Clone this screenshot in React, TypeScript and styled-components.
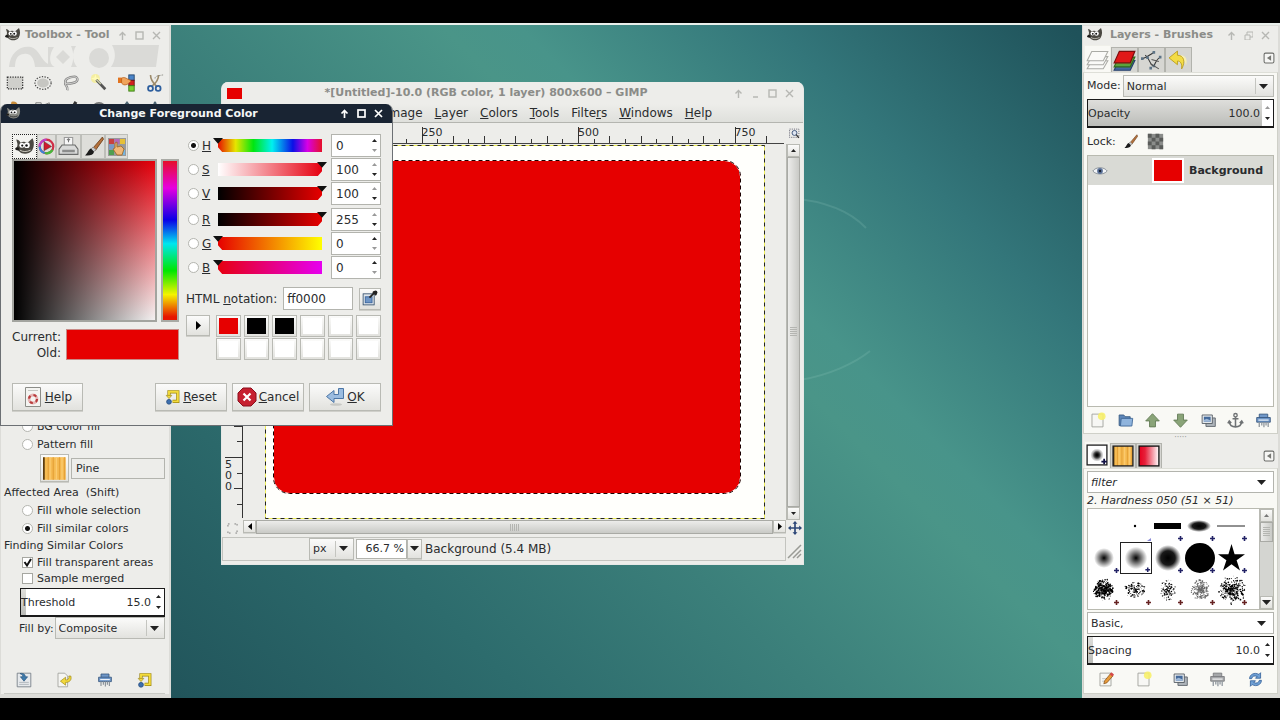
import React, { ReactNode } from 'react';
import styled, { createGlobalStyle, css } from 'styled-components';

const Global = createGlobalStyle`
  * { box-sizing: border-box; }
  body { margin: 0; background: #000; }
  body, button, input, select {
    font-family: 'DejaVu Sans', sans-serif;
    font-size: 11px;
    color: #2a2c2e;
  }
  button { padding: 0; }
  svg { display: block; flex: none; }
`;

/* ---------- desktop ---------- */

const Screen = styled.div`
  min-height: 100vh;
  padding: 23px 0 22px;
  background: #000;
  display: flex;
  flex-direction: column;
`;

const Desktop = styled.main`
  position: relative;
  flex: 1;
  display: flex;
  justify-content: space-between;
  border-top: 2px solid #e9efeb;
  overflow: hidden;
  background: linear-gradient(45deg, #1b464e 0%, #22565c 10%, #2d6c6d 27%, #3b7f7a 42%, #4a9588 57%, #48948a 61%, #33767a 74%, #1f525a 89%, #1b4b54 100%);
`;

const Wallpaper = styled.svg`
  position: absolute;
  left: 690px;
  top: 160px;
`;

/* ---------- window parts ---------- */

const Dock = styled.section<{ $width: number }>`
  position: relative;
  width: ${p => p.$width}px;
  display: flex;
  flex-direction: column;
  background: #ededea;
  border: 1px solid #dcdcd8;
  border-bottom-width: 4px;
  border-right-width: 2px;
`;

const FloatingWindow = styled.section<{ $left: number; $top: number; $width: number; $front?: boolean }>`
  position: absolute;
  left: ${p => p.$left}px;
  top: ${p => p.$top}px;
  width: ${p => p.$width}px;
  display: flex;
  flex-direction: column;
  background: #ededea;
  border: 1px solid ${p => (p.$front ? '#6c7074' : '#e6e8e6')};
  border-top: 0;
  border-radius: 7px 7px 0 0;
  overflow: hidden;
`;

const TitleBar = styled.header<{ $tone?: 'dark' | 'dock' }>`
  height: ${p => (p.$tone === 'dark' ? 19 : p.$tone === 'dock' ? 18 : 22)}px;
  flex: none;
  display: flex;
  align-items: center;
  gap: 4px;
  padding: 0 ${p => (p.$tone === 'dock' ? 4 : 5)}px;
  background: ${p => (p.$tone === 'dark' ? '#192433' : '#ededea')};
  color: ${p => (p.$tone === 'dark' ? '#f4f6f6' : '#8b8c88')};
`;

const Title = styled.h1<{ $center?: boolean }>`
  flex: 1;
  margin: 0;
  font-size: 11px;
  line-height: 16px;
  font-weight: bold;
  white-space: nowrap;
  text-align: ${p => (p.$center ? 'center' : 'left')};
`;

const DockTitle = styled(Title)`
  padding-left: 3px;
`;

const WindowButtons = styled.div<{ $light?: boolean }>`
  display: flex;
  color: ${p => (p.$light ? '#fff' : '#b6b7b3')};
`;

const BareButton = styled.button<{ $w?: number; $h?: number }>`
  width: ${p => p.$w ?? 17}px;
  height: ${p => p.$h ?? 16}px;
  border: 0;
  background: none;
  color: inherit;
  display: flex;
  align-items: center;
  justify-content: center;
`;

/* ---------- controls ---------- */

const raised = css`
  border: 1px solid #b9bab4;
  background: linear-gradient(#fbfbfa, #e2e2de);
`;

const field = css`
  border: 1px solid #b3b4ae;
  background: #fff;
`;

const RaisedButton = styled.button<{ $w: number; $h: number }>`
  ${raised}
  width: ${p => p.$w}px;
  height: ${p => p.$h}px;
  display: flex;
  align-items: center;
  justify-content: center;
  gap: 2px;
  font-size: 12px;
  box-shadow: 0 1px 0 #cfcfca;
`;

const Radio = styled.input.attrs({ type: 'radio' })`
  appearance: none;
  flex: none;
  width: 11px;
  height: 11px;
  margin: 0;
  border: 1px solid #b4b5af;
  border-radius: 50%;
  background: #fff;
  &:checked { background: radial-gradient(circle, #111 0 2px, #fff 3px); }
`;

const CheckWrap = styled.span`
  display: grid;
  flex: none;
  > * { grid-area: 1 / 1; }
  > svg { pointer-events: none; z-index: 1; }
`;

const Check = styled.input.attrs({ type: 'checkbox' })`
  appearance: none;
  width: 11px;
  height: 11px;
  margin: 0;
  border: 1px solid #a6a7a1;
  background: #fff;
`;

const ComboBox = styled.div<{ $flat?: boolean; $width?: number }>`
  ${p => (p.$flat ? field : raised)}
  position: relative;
  height: 22px;
  ${p => (p.$width ? `width: ${p.$width}px;` : 'flex: 1;')}
  min-width: 0;
  display: flex;
  align-items: center;
  > svg { position: absolute; right: ${p => (p.$flat ? 7 : 5)}px; pointer-events: none; }
  &::after {
    content: '';
    position: absolute;
    right: 17px;
    top: 2px;
    bottom: 2px;
    border-left: ${p => (p.$flat ? 0 : 1)}px solid #c4c5c0;
  }
`;

const Select = styled.select<{ $size?: number; $italic?: boolean }>`
  appearance: none;
  width: 100%;
  height: 20px;
  padding: 0 18px 0 3px;
  border: 0;
  background: none;
  font-size: ${p => p.$size ?? 11}px;
  font-style: ${p => (p.$italic ? 'italic' : 'normal')};
`;

const ScaleBox = styled.div`
  display: flex;
  height: 29px;
  border: 1px solid #1a1a1a;
  border-bottom-width: 2px;
  background: #fff;
`;

const ScaleFill = styled.div<{ $fill: string }>`
  flex: 1;
  min-width: 0;
  display: flex;
  align-items: center;
  background: linear-gradient(to right, transparent ${p => p.$fill}, #fff ${p => p.$fill}), linear-gradient(#dededb, #bcbdb9);
`;

const ScaleInput = styled.input`
  flex: 1;
  width: 20px;
  min-width: 0;
  padding: 0 2px 0 0;
  border: 0;
  background: none;
  text-align: right;
`;

const Steppers = styled.div<{ $w?: number }>`
  width: ${p => p.$w ?? 11}px;
  flex: none;
  display: flex;
  flex-direction: column;
  justify-content: space-evenly;
  align-items: center;
`;

const SpinField = styled.div`
  ${field}
  width: 50px;
  height: 23px;
  display: flex;
  input {
    flex: 1;
    min-width: 0;
    width: 20px;
    padding: 0 0 0 4px;
    border: 0;
    background: none;
    font-size: 12px;
  }
`;

/* ---------- small pieces ---------- */

const Up = ({ c = '#222' }: { c?: string }) => (
  <svg width="5" height="3" viewBox="0 0 5 3"><path d="M0 3L2.5 0L5 3z" fill={c} /></svg>
);
const Down = ({ c = '#222', big }: { c?: string; big?: boolean }) => (
  <svg width={big ? 9 : 5} height={big ? 5 : 3} viewBox="0 0 6 3" preserveAspectRatio="none"><path d="M0 0H6L3 3z" fill={c} /></svg>
);

const StepperPair = ({ name, w, offUp, offDown }: { name: string; w?: number; offUp?: boolean; offDown?: boolean }) => (
  <Steppers $w={w}>
    <BareButton $w={9} $h={9} aria-label={`Increase ${name}`}><Up c={offUp ? '#999' : '#222'} /></BareButton>
    <BareButton $w={9} $h={9} aria-label={`Decrease ${name}`}><Down c={offDown ? '#999' : '#222'} /></BareButton>
  </Steppers>
);

const Scale = ({ label, value, fill, offUp }: { label: string; value: string; fill: string; offUp?: boolean }) => (
  <ScaleBox>
    <ScaleFill $fill={fill}>
      <label htmlFor={label}>{label}</label>
      <ScaleInput id={label} defaultValue={value} />
    </ScaleFill>
    <StepperPair name={label} offUp={offUp} />
  </ScaleBox>
);

const Combo = ({ label, value, flat, italic, size, width, id }: { label: string; value: string; flat?: boolean; italic?: boolean; size?: number; width?: number; id?: string }) => (
  <ComboBox $flat={flat} $width={width}>
    <Select id={id} aria-label={label} $italic={italic} $size={size}><option>{value}</option></Select>
    <Down big />
  </ComboBox>
);

const winGlyphs: Record<string, ReactNode> = {
  up: <path d="M4.500 9V1.500M1.500 4.500L4.500 1.500L7.500 4.500" />,
  min: <path d="M2 8H7" />,
  max: <rect x="1" y="1" width="7" height="7" />,
  restore: <path d="M1 4H6V9H1zM3 4V1H9V6H6" strokeWidth="1" />,
  close: <path d="M1 1L8 8M8 1L1 8" />,
};

const WinControls = ({ kinds, light }: { kinds: string[]; light?: boolean }) => (
  <WindowButtons $light={light}>
    {kinds.map(k => (
      <BareButton key={k} aria-label={k}>
        <svg width="9" height="9" viewBox="0 0 9 9" fill="none" stroke="currentColor" strokeWidth={light ? 1.7 : 1.4}>{winGlyphs[k]}</svg>
      </BareButton>
    ))}
  </WindowButtons>
);

const Wilber = ({ size = 16, light }: { size?: number; light?: boolean }) => (
  <svg width={size} height={size} viewBox="0 0 16 16">
    <path d="M1 2C2.500 2 3.500 3 4.500 4.500C6 3.500 8 3.600 10 4.500L14 1C15.500 4 15.500 8 13.500 11C11 14 5.500 14 3.500 11.500L.5 9.500C1.500 8.500 2 7 2 5.500z" fill={light ? '#8a8b84' : '#4a4842'} />
    <circle cx="5.500" cy="6.500" r="2" fill="#fff" /><circle cx="9.500" cy="6.500" r="2.300" fill="#fff" />
    <circle cx="5.800" cy="6.800" r=".9" fill="#111" /><circle cx="9.200" cy="6.800" r="1" fill="#111" />
    <path d="M4 10.500C6 12 9.500 12 12.500 10.500" stroke={light ? '#222' : '#c9c7bd'} strokeWidth=".8" fill="none" />
    <ellipse cx="1.800" cy="9.300" rx="1.600" ry="1.200" fill="#1d1c1a" />
  </svg>
);

/* ---------- icons, all on a 20 x 20 grid ---------- */

const sheet = <path d="M3.500 2.500H16.500V17.500H3.500z" fill="#f7f7f4" stroke="#9c9d98" />;
const shred = (body: string, edge: string) => (
  <>
    <path d="M5 2.500H15V8H5z" fill={body} stroke={edge} />
    <path d="M2 6.500H18V12H2z" fill={body} stroke={edge} />
    <path d="M4 9.500H16" stroke="#fff" strokeWidth="1.200" />
    <path d="M5 12V17.500M8 12V16M10.500 12V18M13 12V16M15.500 12V17.500" stroke="#8d959c" strokeWidth="1.500" />
  </>
);
const resetShape = (
  <>
    <path d="M5 8V3.500H16V15.500H9.500" fill="none" stroke="#9a8412" strokeWidth="4" />
    <path d="M5 8V3.500H16V15.500H9.500" fill="none" stroke="#f4dc3c" strokeWidth="2.400" />
    <path d="M1.500 8H8.500L5 12z" fill="#f4dc3c" stroke="#9a8412" strokeWidth=".8" />
    <circle cx="5" cy="16" r="3" fill="#3d6fae" stroke="#254b7e" />
  </>
);
const brushShape = (
  <>
    <path d="M18.500 1L9.500 11.500L12 13.500L19.500 3z" fill="#b4713c" stroke="#6c401d" strokeWidth=".8" />
    <path d="M9.500 10.500L7.500 12.500L10 15L12.500 13z" fill="#c9cbcc" stroke="#777" strokeWidth=".6" />
    <path d="M7.500 12C5 13 5 16 2 18.500C6.500 19 10 18 10.500 15z" fill="#1c1c1c" />
  </>
);
const copies = (
  <>
    <path d="M7 7H18V17H7z" fill="#aeb4ba" stroke="#5a6068" />
    <path d="M2.500 3.500H14.500V13.500H2.500z" fill="#e8ecef" stroke="#4c545c" />
    <path d="M4.500 5.500H12.500V11.500H4.500z" fill="#44699a" />
    <path d="M4.500 9.500L8 8L12.500 10V11.500H4.500z" fill="#9fb9d8" />
  </>
);
const pine = (
  <>
    <rect x="1" y="1" width="18" height="18" fill="#f5bb52" />
    <path d="M1.500 1V19" stroke="#5b3c10" strokeWidth="1.400" />
    <path d="M5 1V19M9 1V19M14 1V19M18 1V19" stroke="#e6a238" strokeWidth="1" />
    <path d="M6.500 1V19M11.500 1V19M16 1V19" stroke="#fcca70" strokeWidth="1" />
  </>
);

const icons: Record<string, ReactNode> = {
  rect: <><rect x="2" y="4" width="16" height="12" fill="#cfcfcb" /><rect x="1.500" y="3.500" width="17" height="13" fill="none" stroke="#333" strokeWidth="1.400" strokeDasharray="1.500 1.300" /></>,
  ellipse: <><ellipse cx="10" cy="10" rx="6.500" ry="5" fill="#c6c6c2" /><ellipse cx="10" cy="10" rx="9" ry="7" fill="none" stroke="#444" strokeWidth="1.300" strokeDasharray="1.500 1.500" /></>,
  lasso: <><path d="M4 10C2 6 8 3 14 3C19 4 18 9 12 10C8 11 4 11 4 10C2 12 7 13 6 18" fill="none" stroke="#808080" strokeWidth="2.600" /><path d="M4 10C2 6 8 3 14 3C19 4 18 9 12 10C8 11 4 11 4 10C2 12 7 13 6 18" fill="none" stroke="#cdcdcb" strokeWidth="1.200" /></>,
  wand: <><circle cx="6" cy="5" r="5" fill="#f5ee8e" opacity=".8" /><path d="M6 0L7 4L11 5L7 6.500L6 10L5 6.500L1 5L5 4z" fill="#fffbb8" /><path d="M7 6.500L17 17" stroke="#555" strokeWidth="3" /><path d="M7 6L12 11" stroke="#c9cba8" strokeWidth="1.500" /></>,
  bycolor: <><rect x="12" y="1" width="6" height="6" fill="#4a84c8" stroke="#23456e" /><rect x="12" y="7" width="6" height="6" fill="#d22020" stroke="#6e1010" /><rect x="12" y="13" width="6" height="6" fill="#78d234" stroke="#3f7a14" /><path d="M0 4H5V10H0z" fill="#e27420" /><path d="M4 5C7 2 10 6 14 7C15 9 12 9.500 11 11C8 13 5 12 4 10z" fill="#f0a45c" stroke="#b35a14" strokeWidth=".8" /></>,
  scissors: <><path d="M5 1C5 6 9 11 12 14M14 1C14 6 10 11 6 14" stroke="#9c8a6a" strokeWidth="1.800" fill="none" /><path d="M10 5C10 2 14 2 19 1" stroke="#8d8d86" fill="none" strokeDasharray="2 1" /><circle cx="5" cy="16" r="2.700" fill="none" stroke="#2e5f9e" strokeWidth="2" /><circle cx="13.500" cy="16" r="2.700" fill="none" stroke="#2e5f9e" strokeWidth="2" /></>,
  fgselect: <path d="M6 1C9 0 13 1 13 5V18H5V6z" fill="#c98d3a" />,
  align: <path d="M2 2H8V18H2zM12 4L17 2V18H12z" fill="none" stroke="#777" />,
  crop: <path d="M14 0L6 14L5 18L9 16L17 2z" fill="#333" />,
  zoomtool: <circle cx="10" cy="9" r="7" fill="#ddd" stroke="#777" strokeWidth="2" />,
  move: <path d="M10 0L13 4H11V16H9V4H7z" fill="#4c6472" />,
  measure: <path d="M10 1L4 18M10 1L16 18" stroke="#4c6472" strokeWidth="2" />,
  save: <><path d="M1.500 1.500H18.500V18.500H1.500z" fill="#e6e9ec" stroke="#6c757e" /><path d="M4 13H16M4 15.500H16" stroke="#a7adb2" /><path d="M5 2C9 1 12 3 11.500 6H14.500L10 11.500L5.500 6H8.500C9 4 7 3 5 2z" fill="#3f7bac" stroke="#1f4d78" strokeWidth=".8" /></>,
  restore: <><path d="M2.500 1.500H11L14.500 5V18.500H2.500z" fill="#f5f5f2" stroke="#9c9d98" /><path d="M18.500 5C20 10 17 13 12 13V16.500L5.500 11.500L12 6.500V10C15 10 17 8.500 16 5z" fill="#f2d83c" stroke="#98820f" strokeWidth=".8" /></>,
  shred: shred('#6f97c8', '#35557c'),
  shredGrey: shred('#a6a8aa', '#77797b'),
  reset: resetShape,
  newSheet: <>{sheet}<circle cx="15" cy="5" r="4.500" fill="#f7f06a" opacity=".9" /></>,
  folder: <><path d="M2.500 3.500H8L9.500 5.500H15.500V16H2.500z" fill="#5d86b8" stroke="#36587f" /><path d="M5 7.500H18.500L17.500 16.500H4z" fill="#8fb4dd" stroke="#3d6595" /></>,
  raise: <path d="M10 2L18 10.500H13.500V17.500H6.500V10.500H2z" fill="#8aa478" stroke="#5f7752" />,
  lower: <path d="M10 18L18 9.500H13.500V2.500H6.500V9.500H2z" fill="#8aa478" stroke="#5f7752" />,
  copies,
  anchor: <><circle cx="10" cy="3.800" r="2" fill="none" stroke="#6f7274" strokeWidth="1.600" /><path d="M10 6V17M6.500 8H13.500M2.500 11C3 15 6 17.500 10 17.500C14 17.500 17 15 17.500 11M1 13.500L2.700 10.500L5 13M15 13L17.300 10.500L19 13.500" fill="none" stroke="#6f7274" strokeWidth="1.800" /></>,
  edit: <>{sheet}<path d="M6 9H12M6 12H10" stroke="#bbb" /><path d="M8 15L9 11.500L16 3L19 5.500L11.500 14z" fill="#e79a3a" stroke="#7d4a14" strokeWidth=".8" /><path d="M15 4L17 1.500L20 4L18 6.500z" fill="#d54848" /></>,
  refresh: <path d="M3 9C3 4 9 1 14 4L16 2V8.500H10L12 6.500C9 5 6 6 5.500 9zM17 11C17 16 11 19 6 16L4 18V11.500H10L8 13.500C11 15 14 14 14.500 11z" fill="#6e9fd4" stroke="#2b5a94" strokeWidth=".9" />,
  brush: brushShape,
  lockBrush: brushShape,
  checker: <><rect x="1" y="1" width="18" height="18" fill="#8b8d8b" /><path d="M1 1H5.500V5.500H1zM10 1H14.500V5.500H10zM5.500 5.500H10V10H5.500zM14.500 5.500H19V10H14.500zM1 10H5.500V14.500H1zM10 10H14.500V14.500H10zM5.500 14.500H10V19H5.500zM14.500 14.500H19V19H14.500z" fill="#5a5c5a" /></>,
  layers: <g fill="#fafaf8" stroke="#aaaba6" strokeWidth=".9"><path d="M5 11H19L15 18H1z" /><path d="M5 7.500H19L15 14.500H1z" /><path d="M5 3H19L15 11H1z" /></g>,
  channels: <><path d="M5 10H19L15 18.500H1z" fill="#4667a0" stroke="#26406c" /><path d="M5 7H19L15 15.500H1z" fill="#5da23c" stroke="#2f6a1a" /><path d="M5.500 2H19L15 12H1z" fill="#e01818" stroke="#7c0c0c" /></>,
  paths: <><path d="M2 8C5 7 8 5 12 2.500M4 5C9 8 7 13 12 15.500C14 13 14 9 18 7" fill="none" stroke="#333" /><path d="M0 7h2.500v2.500h-2.500zM11 1h2.500v2.500h-2.500zM5 6h2.500v2.500h-2.500zM11 14h2.500v2.500h-2.500zM17 5.500h2.500v2.500h-2.500zM8 16h2.500v2.500h-2.500z" fill="#5d7487" /><path d="M9 13L17 18M10 9L17 11" stroke="#555" /></>,
  undo: <><path d="M12 5C17 5 19 9 17 15C17 11 15 9.500 12 10V13L8 8z" fill="#f6eeb0" /><path d="M9 1V5C15 5 17 11 13 18C13.500 13 12 10.500 9 10.500V14L1 7.500z" fill="#f3dc45" stroke="#b79a18" strokeWidth=".8" /></>,
  printer: <><path d="M6 1.500H14V9H6z" fill="#f7f7f7" stroke="#9a9a9a" /><path d="M10 2.500V6M8.500 4L10 2.500L11.500 4" stroke="#777" fill="none" /><path d="M4 8.500H16L19 12.500V17.500H1V12.500z" fill="#d9dad9" stroke="#6b6c6b" strokeLinejoin="round" /><path d="M4 13H16V15.500H4z" fill="#8b8c8b" /></>,
  wheel: <><circle cx="10" cy="10" r="8" fill="none" stroke="#d03048" strokeWidth="2.600" /><path d="M2 10A8 8 0 0 1 10 2" fill="none" stroke="#c040c8" strokeWidth="2.600" /><path d="M2 10A8 8 0 0 0 8 17.700" fill="none" stroke="#3a84d8" strokeWidth="2.600" /><path d="M8 17.700A8 8 0 0 0 17 14" fill="none" stroke="#46b83c" strokeWidth="2.600" /><path d="M7 4L16 10L7 15z" fill="#cf1c2c" stroke="#333" strokeWidth=".5" /></>,
  palette: <><rect x="1" y="1" width="18" height="18" fill="#999" /><rect x="2" y="2" width="5" height="5" fill="#c84040" /><rect x="7.500" y="2" width="5" height="5" fill="#b46ab8" /><rect x="13" y="2" width="5" height="5" fill="#e6c038" /><rect x="2" y="7.500" width="5" height="5" fill="#7a98c8" /><rect x="2" y="13" width="5" height="5" fill="#4f9e50" /><rect x="13" y="13" width="5" height="5" fill="#74b4e0" /><path d="M8 6L10 5V10L14 9L17 12L15 18H10L6 12L8 11z" fill="#f0b878" stroke="#9a6424" strokeWidth=".8" /></>,
  pick: <><rect x="2.500" y="4.500" width="13" height="13" fill="#dfe5ea" stroke="#35506e" /><rect x="5" y="8" width="8" height="7" fill="#6e95c6" stroke="#35609a" /><path d="M10 9L15 4M14 2L18 6" stroke="#222" strokeWidth="2" /><circle cx="17" cy="3" r="2.300" fill="#222" /></>,
  help: <><path d="M2.500 .5H17.500V19.500H2.500z" fill="#f4f4f1" stroke="#8c8d88" /><path d="M5 3.500H15" stroke="#c4c5c0" /><circle cx="10" cy="12" r="4" fill="none" stroke="#e6b4b4" strokeWidth="2.800" /><circle cx="10" cy="12" r="4" fill="none" stroke="#b83c3c" strokeWidth="2.200" strokeDasharray="3.100 3.180" /></>,
  cancel: <><path d="M6 1H14L19 6V14L14 19H6L1 14V6z" fill="#c62030" stroke="#8a0f1c" /><path d="M6.500 6.500L13.500 13.500M13.500 6.500L6.500 13.500" stroke="#fff" strokeWidth="2.200" /></>,
  ok: <><ellipse cx="11" cy="17.500" rx="6" ry="1.300" fill="#c8c9c5" /><path d="M13.500 1.500H18.500V11.500H9V15.500L1.500 9.500L9 3.500V7.500H13.500z" fill="#9bbce0" stroke="#4c76a6" /></>,
  pine,
  pineTab: <>{pine}<rect x="1" y="1" width="18" height="18" fill="none" stroke="#222" strokeWidth="1.200" /></>,
  gradient: <rect x="1" y="1" width="18" height="18" fill="url(#redWhite)" stroke="#111" strokeWidth="1.200" />,
  brushTab: <><rect x="1" y="1" width="18" height="18" fill="#fff" stroke="#222" strokeWidth="1.200" /><circle cx="10" cy="10" r="6" fill="url(#softer)" /><circle cx="10" cy="10" r="4" fill="url(#softer)" /><path d="M16.500 13.500V18.500M14 16H19" stroke="#114" strokeWidth="1.600" /></>,
  eye: <><path d="M1 10C5 4.500 15 4.500 19 10C15 15 5 15 1 10z" fill="#f3f5f7" stroke="#8b929a" strokeWidth="1.200" /><circle cx="10" cy="10" r="3.600" fill="#5a7198" /><circle cx="10" cy="10" r="1.600" fill="#1b2433" /></>,
  nav: <path d="M10 0L13.500 4H11.200V8.800H16V6.500L20 10L16 13.500V11.200H11.200V16H13.500L10 20L6.500 16H8.800V11.200H4V13.500L0 10L4 6.500V8.800H8.800V4H6.500z" fill="#2c4677" />,
  zoomFit: <><rect x="1" y="2" width="17" height="15" fill="none" stroke="#556" strokeDasharray="2 2" strokeWidth="1.500" /><circle cx="10" cy="9" r="4.500" fill="#dfe6f2" stroke="#445a80" strokeWidth="1.800" /><path d="M13 12L18 18" stroke="#333" strokeWidth="2.400" /></>,
  quickMask: <path d="M3 7V3H7M13 3H17V7M17 13V17H13M7 17H3V13" fill="none" stroke="#777" strokeWidth="1.400" strokeDasharray="2.500 1.500" />,
  menuLeft: <><rect x="3" y="3" width="14" height="14" rx="2" fill="#f6f6f4" stroke="#6c6d69" strokeWidth="1.500" /><path d="M13 6V14L7 10z" fill="#777873" /></>,
};

const Icon = ({ name, size = 18 }: { name: string; size?: number }) => (
  <svg width={size} height={size} viewBox="0 0 20 20" aria-hidden="true">{icons[name]}</svg>
);

/* ---------- toolbox dock ---------- */

const ToolGrid = styled.div`
  display: grid;
  grid-template-columns: repeat(6, 28px);
  grid-auto-rows: 27px;
`;

const Options = styled.div`
  margin-top: auto;
  padding: 0 4px 0 3px;
  display: flex;
  flex-direction: column;
`;

const OptionLabel = styled.label<{ $h?: number }>`
  height: ${p => p.$h ?? 18}px;
  padding-left: 18px;
  display: flex;
  align-items: center;
  gap: 4px;
  white-space: nowrap;
`;

const Heading = styled.h2`
  margin: 0;
  height: 17px;
  font-size: 11px;
  line-height: 17px;
  font-weight: normal;
  white-space: pre;
`;

const PatternRow = styled.div`
  display: flex;
  align-items: center;
  gap: 2px;
  height: 30px;
  padding-left: 36px;
  margin-bottom: 1px;
`;

const PatternName = styled.input`
  border: 1px solid #b3b4ae;
  background: none;
  height: 21px;
  min-width: 0;
  flex: 1;
  padding: 0 4px;
`;

const Indented = styled.div`
  padding: 2px 0 0 16px;
`;

const FillBy = styled.div`
  display: flex;
  align-items: center;
  gap: 1px;
  height: 22px;
  padding-left: 15px;
  white-space: nowrap;
`;

const IconBar = styled.div<{ $h: number; $spread?: boolean }>`
  height: ${p => p.$h}px;
  flex: none;
  display: flex;
  align-items: center;
  justify-content: ${p => (p.$spread ? 'space-between' : 'space-around')};
  padding: 0 ${p => (p.$spread ? 2 : 0)}px;
`;

const OptionsBar = styled(IconBar)`
  margin-top: 27px;
  border-bottom: 1px solid #c9cac5;
`;

const Banner = () => (
  <svg width="164" height="25" viewBox="0 0 164 25" fill="#dadad7">
    <path d="M8 23C9 8 20 1 30 3C38 5 40 16 47 20V3H53C46 14 50 22 54 23H34C33 12 28 9 23 10C17 10 14 15 14 23z" />
    <path d="M62 6L69 13L62 20L55 13zM70 2H75C71 8 71 17 76 23H70C73 17 73 8 70 2z" />
    <circle cx="98" cy="14" r="10" />
    <path d="M111 1H158L155 23H110C115 16 115 8 111 1z" />
  </svg>
);

const CheckBox = ({ id, on }: { id: string; on?: boolean }) => (
  <CheckWrap>
    <Check id={id} defaultChecked={on} />
    {on && <svg width="11" height="11" viewBox="0 0 11 11"><path d="M2.500 5L5 8.500L9 2" fill="none" stroke="#111" strokeWidth="2" /></svg>}
  </CheckWrap>
);

const tools = ['rect', 'ellipse', 'lasso', 'wand', 'bycolor', 'scissors', 'fgselect', 'align', 'crop', 'zoomtool', 'move', 'measure'];

const Toolbox = () => (
  <Dock $width={171}>
    <TitleBar $tone="dock">
      <Wilber />
      <Title>Toolbox - Tool</Title>
      <WinControls kinds={['up', 'max', 'close']} />
    </TitleBar>
    <Banner />
    <ToolGrid>
      {tools.map(t => <BareButton key={t} $w={28} $h={27} aria-label={t}><Icon name={t} /></BareButton>)}
    </ToolGrid>
    <Options>
      <OptionLabel><Radio name="fill" />BG color fill</OptionLabel>
      <OptionLabel><Radio name="fill" />Pattern fill</OptionLabel>
      <PatternRow>
        <RaisedButton $w={29} $h={28} aria-label="Choose pattern"><Icon name="pine" size={25} /></RaisedButton>
        <PatternName aria-label="Pattern name" defaultValue="Pine" />
      </PatternRow>
      <Heading>{'Affected Area  (Shift)'}</Heading>
      <OptionLabel><Radio name="area" />Fill whole selection</OptionLabel>
      <OptionLabel><Radio name="area" defaultChecked />Fill similar colors</OptionLabel>
      <Heading>Finding Similar Colors</Heading>
      <OptionLabel $h={16} htmlFor="transparent"><CheckBox id="transparent" on />Fill transparent areas</OptionLabel>
      <OptionLabel $h={16} htmlFor="merged"><CheckBox id="merged" />Sample merged</OptionLabel>
      <Indented><Scale label="Threshold" value="15.0" fill="5px" /></Indented>
      <FillBy>
        <label htmlFor="fillby">Fill by:</label>
        <Combo id="fillby" label="Fill by" value="Composite" />
      </FillBy>
      <OptionsBar $h={28}>
        {['save', 'restore', 'shred', 'reset'].map(n => <BareButton key={n} aria-label={n}><Icon name={n} size={16} /></BareButton>)}
      </OptionsBar>
    </Options>
  </Dock>
);

/* ---------- layers dock ---------- */

const DockPage = styled.div<{ $grow?: boolean }>`
  ${p => (p.$grow ? 'flex: 1;' : '')}
  min-height: 0;
  display: flex;
  flex-direction: column;
  padding: 2px 3px 0 3px;
  background: #f9f9f5;
  border: 1px solid #cfd0c8;
  border-top-color: #dedfd8;
`;

const Tabs = styled.div<{ $h: number }>`
  display: flex;
  align-items: flex-end;
  height: ${p => p.$h}px;
  flex: none;
  padding-left: 1px;
  > :last-child { margin: auto 2px auto auto; }
`;

const Tab = styled.button<{ $on?: boolean; $w?: number }>`
  width: ${p => p.$w ?? 27}px;
  height: ${p => (p.$on ? 27 : 25)}px;
  border: 1px solid ${p => (p.$on ? '#f0f0ea' : '#b2b3ad')};
  border-bottom: 0;
  background: ${p => (p.$on ? '#f9f9f5' : '#d6d6d2')};
  display: flex;
  align-items: center;
  justify-content: center;
`;

const Line = styled.div<{ $h: number }>`
  display: flex;
  align-items: center;
  gap: 2px;
  flex: none;
  height: ${p => p.$h}px;
`;

const ModeLine = styled(Line)`
  align-items: flex-start;
  line-height: 22px;
`;

const LockLine = styled(Line)`
  gap: 8px;
`;

const LayerList = styled.div`
  flex: 1;
  min-height: 40px;
  background: #fff;
  border: 1px solid #b9bab0;
`;

const LayerRow = styled.div`
  height: 29px;
  display: flex;
  align-items: center;
  padding-left: 4px;
  background: #d9dad5;
  font-weight: bold;
`;

const Thumb = styled.span`
  width: 32px;
  height: 25px;
  margin: 0 5px 0 44px;
  border: 2px solid #fff;
  background: #e60000;
`;

const Grip = styled.div`
  height: 9px;
  flex: none;
  text-align: center;
  font-size: 8px;
  line-height: 8px;
  color: #999;
`;

const BrushPane = styled.div`
  display: flex;
  height: 102px;
  flex: none;
  background: #fff;
  border: 1px solid #b9bab0;
`;

const BrushGrid = styled.div`
  flex: 1;
  display: grid;
  grid-template-columns: repeat(5, 32px);
  grid-auto-rows: 32px;
  padding-top: 1px;
`;

const BrushCell = styled.button<{ $on?: boolean }>`
  width: 32px;
  height: 32px;
  border: ${p => (p.$on ? '1px solid #222' : '0')};
  background: none;
  display: grid;
  place-items: center;
`;

const BrushCaption = styled.p`
  margin: 0;
  height: 15px;
  line-height: 15px;
  font-style: italic;
  white-space: nowrap;
`;

const ScrollV = styled.div<{ $w: number }>`
  width: ${p => p.$w}px;
  flex: none;
  display: flex;
  flex-direction: column;
  background: #d4d5d1;
  border-left: 1px solid #b9bab4;
`;

const ScrollH = styled.div`
  display: flex;
  height: 14px;
  background: #d4d5d1;
`;

const ScrollButton = styled.button`
  ${raised}
  width: 13px;
  height: 13px;
  flex: none;
  display: flex;
  align-items: center;
  justify-content: center;
`;

const Handle = styled.div<{ $len?: number; $vertical?: boolean }>`
  ${p => (p.$len ? `flex: none; height: ${p.$len}px;` : 'flex: 1;')}
  border: 1px solid #a9aaa5;
  background: linear-gradient(${p => (p.$vertical ? 'to right' : 'to bottom')}, #ececea, #c9cac6);
  display: flex;
  align-items: center;
  justify-content: center;
`;

const Ridges = ({ vertical, n = 4 }: { vertical?: boolean; n?: number }) => (
  <svg width={vertical ? 7 : n * 2} height={vertical ? n * 2 : 7}>
    {Array.from({ length: n }, (_, i) => vertical
      ? <path key={i} d={`M0 ${i * 2 + 0.5}H7`} stroke="#b4b5b1" />
      : <path key={i} d={`M${i * 2 + 0.5} 0V7`} stroke="#b4b5b1" />)}
  </svg>
);

/* Bristle marks: small dots that thin out away from the centre of the stamp. */
function splatter(seed: number, n: number, spreadX: number, spreadY: number, r: number) {
  let s = seed * 7919;
  const rnd = () => { s = (s * 16807) % 2147483647; return s / 2147483647; };
  return Array.from({ length: n }, (_, i) => {
    const a = rnd() * Math.PI * 2;
    const d = Math.pow(rnd(), 0.7) * (0.75 + rnd() * 0.4);
    return <circle key={i} cx={16 + Math.cos(a) * d * spreadX} cy={16 + Math.sin(a) * d * spreadY} r={0.2 + rnd() * r} />;
  });
}

const plus = (c: string) => <path d="M28.500 26V31M26 28.500H31" stroke={c} strokeWidth="1.600" />;

const brushes: { art: ReactNode; mark?: string }[] = [
  { art: null },
  { art: <><circle cx="15" cy="16" r="1.200" /><path d="M31 28V31H27z" fill="#8a8ad8" /></> },
  { art: <rect x="2" y="13" width="27" height="6" />, mark: '#226' },
  { art: <ellipse cx="15" cy="16" rx="12" ry="6" fill="url(#soft)" />, mark: '#226' },
  { art: <path d="M1 16H29" stroke="#222" strokeWidth="1" />, mark: '#226' },
  { art: <circle cx="16" cy="16" r="10" fill="url(#softer)" />, mark: '#226' },
  { art: <circle cx="16" cy="16" r="12" fill="url(#softer)" />, mark: '#226' },
  { art: <circle cx="16" cy="16" r="13" fill="url(#soft)" />, mark: '#226' },
  { art: <circle cx="16" cy="16" r="15" />, mark: '#226' },
  { art: <path d="M15.500 2L18.600 12.300H29L20.600 18.300L24 28.500L15.500 22.200L7 28.500L10.400 18.300L2 12.300H12.400z" />, mark: '#226' },
  { art: splatter(7, 260, 10, 10, 0.8), mark: '#622' },
  { art: splatter(31, 110, 11, 8, 0.7), mark: '#622' },
  { art: splatter(99, 130, 7, 11, 0.6), mark: '#622' },
  { art: <g opacity=".6">{splatter(55, 230, 9, 10, 0.7)}</g>, mark: '#622' },
  { art: splatter(123, 320, 13, 13, 0.7), mark: '#622' },
];

const LayersDock = () => (
  <Dock $width={198}>
    <TitleBar $tone="dock">
      <Wilber />
      <DockTitle>Layers - Brushes</DockTitle>
      <WinControls kinds={['up', 'restore', 'close']} />
    </TitleBar>
    <Tabs $h={28}>
      <Tab $on aria-label="Layers"><Icon name="layers" size={23} /></Tab>
      <Tab aria-label="Channels"><Icon name="channels" size={23} /></Tab>
      <Tab aria-label="Paths"><Icon name="paths" size={21} /></Tab>
      <Tab aria-label="Undo history"><Icon name="undo" size={21} /></Tab>
      <BareButton $w={14} $h={14} aria-label="Configure tab"><Icon name="menuLeft" size={14} /></BareButton>
    </Tabs>
    <DockPage $grow>
      <ModeLine $h={24}>
        <label htmlFor="mode">Mode:</label>
        <Combo id="mode" label="Mode" value="Normal" />
      </ModeLine>
      <Scale label="Opacity" value="100.0" fill="100%" offUp />
      <LockLine $h={27}>
        <span>Lock:</span>
        <BareButton $w={14} aria-label="Lock pixels"><Icon name="lockBrush" size={15} /></BareButton>
        <BareButton $w={20} aria-label="Lock alpha"><Icon name="checker" size={17} /></BareButton>
      </LockLine>
      <LayerList>
        <LayerRow><Icon name="eye" size={16} /><Thumb />Background</LayerRow>
      </LayerList>
      <IconBar $h={26} $spread>
        {['newSheet', 'folder', 'raise', 'lower', 'copies', 'anchor', 'shred'].map(n => <BareButton key={n} aria-label={n}><Icon name={n} size={17} /></BareButton>)}
      </IconBar>
    </DockPage>
    <Grip>·····</Grip>
    <Tabs $h={25}>
      <Tab $on $w={26} aria-label="Brushes"><Icon name="brushTab" size={22} /></Tab>
      <Tab $w={26} aria-label="Patterns"><Icon name="pineTab" size={22} /></Tab>
      <Tab $w={26} aria-label="Gradients"><Icon name="gradient" size={22} /></Tab>
      <BareButton $w={14} $h={14} aria-label="Configure tab"><Icon name="menuLeft" size={14} /></BareButton>
    </Tabs>
    <DockPage>
      <Line $h={22}><Combo flat italic label="Filter brushes" value="filter" /></Line>
      <BrushCaption>2. Hardness 050 (51 × 51)</BrushCaption>
      <BrushPane>
        <BrushGrid>
          {brushes.map((b, i) => (
            <BrushCell key={i} $on={i === 6} aria-label={`Brush ${i + 1}`}>
              <svg width={i === 6 ? 30 : 32} height={i === 6 ? 30 : 32} viewBox="0 0 32 32">{b.art}{b.mark && plus(b.mark)}</svg>
            </BrushCell>
          ))}
        </BrushGrid>
        <ScrollV $w={14}>
          <ScrollButton aria-label="Scroll up"><Up c="#777" /></ScrollButton>
          <Handle $len={20} $vertical><Ridges vertical n={5} /></Handle>
          <Line $h={54} />
          <ScrollButton aria-label="Scroll down"><Down big /></ScrollButton>
        </ScrollV>
      </BrushPane>
      <Line $h={26}><Combo flat label="Brush tag" value="Basic," /></Line>
      <Scale label="Spacing" value="10.0" fill="5px" />
      <IconBar $h={28}>
        {['edit', 'newSheet', 'copies', 'shredGrey', 'refresh'].map(n => <BareButton key={n} aria-label={n}><Icon name={n} size={17} /></BareButton>)}
      </IconBar>
    </DockPage>
  </Dock>
);

/* ---------- image window ---------- */

const MenuBar = styled.nav`
  display: flex;
  align-items: center;
  gap: 12px;
  height: 19px;
  padding-left: 163px;
  border-bottom: 1px solid #b4b5b0;
  background: linear-gradient(#ededea, #dfe0dc);
`;

const MenuItem = styled.button`
  border: 0;
  background: none;
  font-size: 12px;
  line-height: 16px;
`;

const ImageGrid = styled.div`
  display: grid;
  grid-template-columns: 21px 1fr 17px;
  grid-template-rows: 21px 376px 16px;
`;

const Corner = styled.div`
  display: grid;
  place-items: center;
`;

const StatusBar = styled.footer`
  display: flex;
  align-items: center;
  height: 25px;
  margin-bottom: 3px;
`;

const StatusFrame = styled.div`
  flex: 1;
  display: flex;
  align-items: center;
  height: 24px;
  padding-left: 86px;
  border: 1px solid #c3c4bf;
  font-size: 12px;
`;

const ZoomField = styled.input`
  ${field}
  width: 51px;
  height: 20px;
  margin-left: 2px;
  padding: 0 2px;
  text-align: right;
`;

const StatusText = styled.span`
  padding-left: 3px;
  font-size: 12px;
`;

const ticks = Array.from({ length: 33 }, (_, i) => i);

const HRuler = () => (
  <svg width="100%" height="21">
    {ticks.map(i => {
      const x = Math.round(22 + i * 15.65) + 0.5;
      return <path key={i} d={`M${x} ${i % 10 === 0 ? 4 : i % 2 ? 16 : 13}V21`} stroke="#333" />;
    })}
    <path d="M0 20.500H541" stroke="#444" />
    {[0, 250, 500, 750].map(v => <text key={v} x={22 + v * 0.626} y="13" fontSize="11" fill="#2a2c2e">{v}</text>)}
  </svg>
);

const VRuler = () => (
  <svg width="21" height="100%">
    {ticks.slice(0, 24).map(i => {
      const y = Math.round(i * 15.65) + 0.5;
      return <path key={i} d={`M${i % 10 === 0 ? 3 : i % 2 ? 15 : 12} ${y}H20`} stroke="#333" />;
    })}
    <path d="M20.500 0V374" stroke="#333" />
    {['5', '0', '0'].map((d, i) => <text key={i} x="3" y={324 + i * 11} fontSize="11" fill="#2a2c2e">{d}</text>)}
  </svg>
);

const Canvas = () => (
  <svg width="100%" height="376">
    <rect x="22.500" y="1.500" width="499" height="373" fill="#fffffc" stroke="#f0f05a" />
    <rect x="22.500" y="1.500" width="499" height="373" fill="none" stroke="#222" strokeDasharray="4 4" />
    <rect x="30.500" y="16.500" width="467" height="333" rx="16" fill="#e60000" stroke="#fff" />
    <rect x="30.500" y="16.500" width="467" height="333" rx="16" fill="none" stroke="#1a0000" strokeDasharray="4 3" />
  </svg>
);

const Mn = ({ t, at = 0 }: { t: string; at?: number }) => <span>{t.slice(0, at)}<u>{t[at]}</u>{t.slice(at + 1)}</span>;

const ImageWindow = () => (
  <FloatingWindow $left={221} $top={57} $width={583}>
    <TitleBar>
      <svg width="15" height="11"><rect width="15" height="11" fill="#e60000" /></svg>
      <Title $center>*[Untitled]-10.0 (RGB color, 1 layer) 800x600 – GIMP</Title>
      <WinControls kinds={['up', 'min', 'max', 'close']} />
    </TitleBar>
    <MenuBar>
      {['Image', 'Layer', 'Colors', 'Tools'].map(m => <MenuItem key={m}><Mn t={m} /></MenuItem>)}
      <MenuItem><Mn t="Filters" at={5} /></MenuItem>
      <MenuItem><Mn t="Windows" /></MenuItem>
      <MenuItem><Mn t="Help" /></MenuItem>
    </MenuBar>
    <ImageGrid>
      <Corner />
      <HRuler />
      <Corner><Icon name="zoomFit" size={11} /></Corner>
      <VRuler />
      <Canvas />
      <ScrollV $w={14}>
        <ScrollButton aria-label="Scroll up"><Up /></ScrollButton>
        <Handle $vertical><Ridges vertical n={5} /></Handle>
        <ScrollButton aria-label="Scroll down"><Down /></ScrollButton>
      </ScrollV>
      <Corner><Icon name="quickMask" size={13} /></Corner>
      <ScrollH>
        <ScrollButton aria-label="Scroll left"><svg width="4" height="7"><path d="M4 0V7L0 3.500z" /></svg></ScrollButton>
        <Handle><Ridges n={5} /></Handle>
        <ScrollButton aria-label="Scroll right"><svg width="4" height="7"><path d="M0 0V7L4 3.500z" /></svg></ScrollButton>
      </ScrollH>
      <Corner><Icon name="nav" size={14} /></Corner>
    </ImageGrid>
    <StatusBar>
      <StatusFrame>
        <Combo label="Unit" value="px" width={45} />
        <ZoomField aria-label="Zoom" defaultValue="66.7 %" />
        <RaisedButton $w={15} $h={20} aria-label="Zoom list"><Down big /></RaisedButton>
        <StatusText>Background (5.4 MB)</StatusText>
      </StatusFrame>
      <svg width="17" height="22" viewBox="0 0 17 22" stroke="#999a95" strokeWidth="1.500"><path d="M2 20L15 7M7 20L15 12M11 20L15 16" /></svg>
    </StatusBar>
  </FloatingWindow>
);

/* ---------- colour dialog ---------- */

const DialogBody = styled.div`
  padding: 11px 11px 14px;
  display: flex;
  flex-direction: column;
  gap: 22px;
`;

const Columns = styled.div`
  display: grid;
  grid-template-columns: 167px 195px;
  justify-content: space-between;
`;

const ModelTabs = styled.div`
  display: flex;
  height: 25px;
`;

const ModelTab = styled.button<{ $on?: boolean; $w: number }>`
  width: ${p => p.$w}px;
  height: 25px;
  border: 1px ${p => (p.$on ? 'dotted #222' : 'solid #bdbeb9')};
  background: ${p => (p.$on ? '#f3f3f0' : '#dededa')};
  display: grid;
  place-items: center;
`;

const PickerRow = styled.div`
  display: flex;
  justify-content: space-between;
  height: 163px;
`;

const Square = styled.div`
  width: 145px;
  border: 2px solid #a3a49f;
  background: linear-gradient(to right, #000, transparent), linear-gradient(#e6000c, #f4f2f2);
`;

const HueStrip = styled.div`
  width: 18px;
  border: 2px solid #a9aaa5;
  background: linear-gradient(#e6102a, #e600e0 17%, #0a00e6 37%, #00e6f0 52%, #00e600 69%, #f4f400 84%, #e61400 98%);
`;

const CurrentOld = styled.div`
  display: flex;
  justify-content: space-between;
  margin-top: 7px;
  font-size: 12px;
  line-height: 16px;
  text-align: right;
`;

const Swatch = styled.div`
  width: 113px;
  height: 31px;
  border: 1px solid #c98a86;
  background: #e60000;
`;

const Channels = styled.div`
  display: grid;
  row-gap: 1px;
`;

const Channel = styled.div<{ $gap?: boolean }>`
  display: flex;
  align-items: center;
  height: 23px;
  margin-top: ${p => (p.$gap ? 2 : 0)}px;
  font-size: 12px;
  > :first-child { margin: 0 3px 0 2px; }
  > :last-child { margin-left: auto; }
`;

const ChannelName = styled.label`
  width: 11px;
`;

const Slider = styled.input.attrs({ type: 'range' })<{ $track: string }>`
  appearance: none;
  flex: none;
  width: 114px;
  height: 15px;
  margin: 0;
  background: linear-gradient(to right, ${p => p.$track}) center / 104px 13px no-repeat;
  &::-webkit-slider-thumb {
    appearance: none;
    width: 10px;
    height: 15px;
    background: linear-gradient(#111 50%, #ededea 50%);
    clip-path: polygon(0 0, 100% 0, 50% 38%, 50% 62%, 100% 100%, 0 100%, 50% 62%, 50% 38%);
  }
`;

const NotationRow = styled.div`
  display: flex;
  align-items: center;
  justify-content: space-between;
  margin-top: 8px;
  font-size: 12px;
  white-space: nowrap;
`;

const Hex = styled.input`
  ${field}
  width: 70px;
  height: 23px;
  padding: 0 3px;
  font-size: 12px;
`;

const History = styled.div`
  display: flex;
  justify-content: space-between;
  align-items: flex-start;
  margin-top: 5px;
`;

const HistoryGrid = styled.div`
  display: grid;
  grid-template-columns: repeat(6, 25px);
  gap: 1px 3px;
`;

const HistoryCell = styled.button<{ $c?: string }>`
  ${raised}
  height: 22px;
  padding: 2px;
  &::before {
    content: '';
    display: block;
    height: 100%;
    background: ${p => p.$c ?? '#fff'};
  }
`;

const Actions = styled.div`
  display: flex;
  gap: 5px;
  > :first-child { margin-right: auto; }
`;

const channels: { n: string; v: string; pos: number; track: string }[] = [
  { n: 'H', v: '0', pos: 0, track: '#e61000, #e6e600 17%, #00e610 34%, #00f0f0 52%, #0a10e6 72%, #d800e6 86%, #e61028' },
  { n: 'S', v: '100', pos: 100, track: '#fff, #e60010' },
  { n: 'V', v: '100', pos: 100, track: '#000, #e60000' },
  { n: 'R', v: '255', pos: 100, track: '#000, #e60000' },
  { n: 'G', v: '0', pos: 0, track: '#e60000, #ffff00' },
  { n: 'B', v: '0', pos: 0, track: '#e60010, #e600f0' },
];

const history = ['#e60000', '#000', '#000', '', '', '', '', '', '', '', '', ''];

const ColorDialog = () => (
  <FloatingWindow $left={0} $top={79} $width={393} $front role="dialog" aria-label="Change Foreground Color">
    <TitleBar $tone="dark">
      <Wilber size={15} light />
      <Title $center>Change Foreground Color</Title>
      <WinControls kinds={['up', 'max', 'close']} light />
    </TitleBar>
    <DialogBody>
      <Columns>
        <div>
          <ModelTabs>
            <ModelTab $on $w={25} aria-label="GIMP"><Wilber size={20} /></ModelTab>
            <ModelTab $w={19} aria-label="Wheel"><Icon name="wheel" size={17} /></ModelTab>
            <ModelTab $w={25} aria-label="CMYK"><Icon name="printer" size={21} /></ModelTab>
            <ModelTab $w={24} aria-label="Watercolor"><Icon name="brush" size={21} /></ModelTab>
            <ModelTab $w={23} aria-label="Palette"><Icon name="palette" size={20} /></ModelTab>
          </ModelTabs>
          <PickerRow><Square /><HueStrip /></PickerRow>
          <CurrentOld>
            <div>Current:<br />Old:</div>
            <Swatch />
          </CurrentOld>
        </div>
        <div>
          <Channels>
            {channels.map((c, i) => (
              <Channel key={c.n} $gap={i === 3}>
                <Radio name="channel" id={`ch-${c.n}`} defaultChecked={i === 0} />
                <ChannelName htmlFor={`ch-${c.n}`}><u>{c.n}</u></ChannelName>
                <Slider $track={c.track} defaultValue={c.pos} aria-label={`${c.n} slider`} />
                <SpinField>
                  <input aria-label={`${c.n} value`} defaultValue={c.v} />
                  <StepperPair name={c.n} offUp={c.pos === 100} offDown={c.pos === 0} />
                </SpinField>
              </Channel>
            ))}
          </Channels>
          <NotationRow>
            <label htmlFor="hex"><Mn t="HTML notation:" at={5} /></label>
            <Hex id="hex" defaultValue="ff0000" />
            <RaisedButton $w={22} $h={22} aria-label="Pick color"><Icon name="pick" size={17} /></RaisedButton>
          </NotationRow>
          <History>
            <RaisedButton $w={24} $h={21} aria-label="Add to history"><svg width="5" height="9"><path d="M0 0V9L5 4.500z" /></svg></RaisedButton>
            <HistoryGrid>
              {history.map((c, i) => <HistoryCell key={i} $c={c || undefined} aria-label={`History ${i + 1}`} />)}
            </HistoryGrid>
          </History>
        </div>
      </Columns>
      <Actions>
        <RaisedButton $w={71} $h={28}><Icon name="help" size={20} /><Mn t="Help" /></RaisedButton>
        <RaisedButton $w={72} $h={28}><Icon name="reset" size={16} /><Mn t="Reset" /></RaisedButton>
        <RaisedButton $w={72} $h={28}><Icon name="cancel" size={20} /><Mn t="Cancel" /></RaisedButton>
        <RaisedButton $w={72} $h={28}><Icon name="ok" size={20} /><Mn t="OK" /></RaisedButton>
      </Actions>
    </DialogBody>
  </FloatingWindow>
);

const App = () => (
  <Screen>
    <Global />
    <Desktop>
      <Wallpaper width="220" height="220" fill="none" stroke="#a8d8cc" strokeOpacity=".16" strokeWidth="2">
        <defs>
          <radialGradient id="soft"><stop offset="0" /><stop offset=".55" stopOpacity=".9" /><stop offset="1" stopOpacity="0" /></radialGradient>
          <radialGradient id="softer"><stop offset="0" /><stop offset=".4" stopOpacity=".6" /><stop offset="1" stopOpacity="0" /></radialGradient>
          <linearGradient id="redWhite"><stop offset="0" stopColor="#e6001e" /><stop offset=".3" stopColor="#e6203a" /><stop offset="1" stopColor="#fff" /></linearGradient>
        </defs>
        <path d="M100 13C135 16 160 26 176 43" />
        <path d="M110 195C140 190 165 178 180 166" />
      </Wallpaper>
      <Toolbox />
      <LayersDock />
      <ImageWindow />
      <ColorDialog />
    </Desktop>
  </Screen>
);

export default App;
